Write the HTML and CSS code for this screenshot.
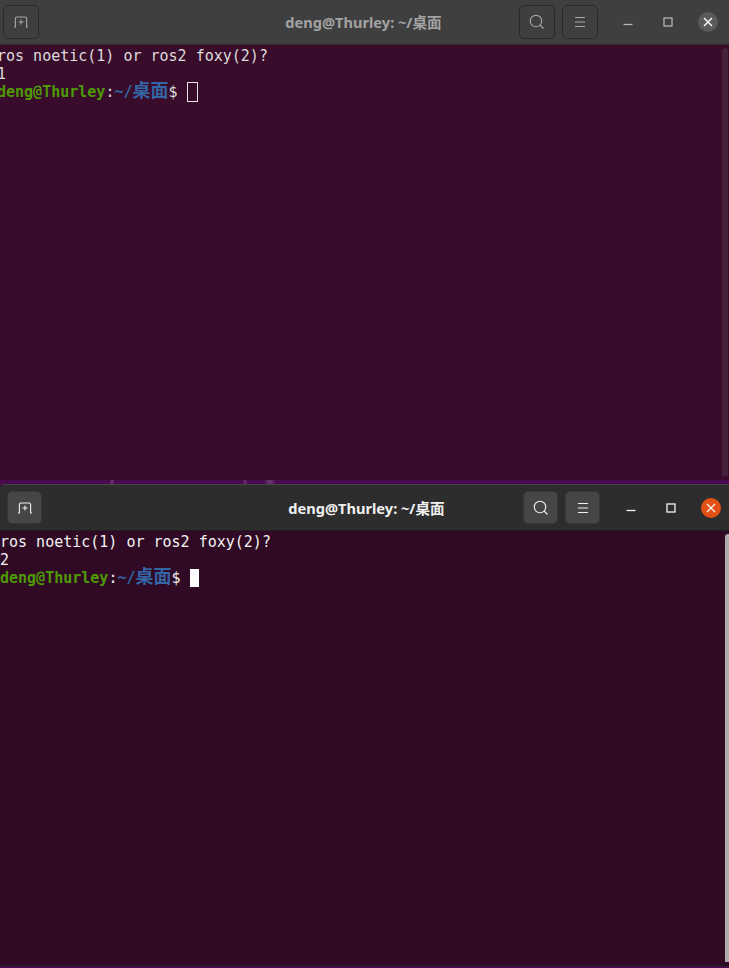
FILE: index.html
```html
<!DOCTYPE html>
<html lang="zh">
<head>
<meta charset="utf-8">
<title>Terminals</title>
<link rel="stylesheet" href="styles.css">
</head>
<body>
<section class="window unfocused">
  <header class="titlebar">
    <div class="side">
      <button class="btn" aria-label="new tab"><svg class="icon" viewBox="0 0 16 16"><path d="M1 13h1.400V4.500a1.500 1.500 0 0 1 1.500-1.500h8.200a1.500 1.500 0 0 1 1.500 1.500V13H15M8 5.500v5M5.500 8h5"/></svg></button>
    </div>
    <h1 class="title">deng@Thurley: ~/<span class="cjk-title">桌面</span></h1>
    <div class="side end">
      <button class="btn" aria-label="search"><svg class="icon" viewBox="0 0 16 16"><circle cx="7" cy="7" r="5.700"/><path d="M11 11l3.500 3.500"/></svg></button>
      <button class="btn" aria-label="menu"><svg class="icon" viewBox="0 0 16 16"><path d="M3 3.500h10M3 8h10M3 12.500h10"/></svg></button>
      <div class="controls">
        <svg class="ctl" viewBox="0 0 20 20"><path d="M5.500 12.500h9"/></svg>
        <svg class="ctl" viewBox="0 0 20 20"><rect x="6" y="6" width="8" height="8"/></svg>
        <span class="close"><svg class="ctl" viewBox="0 0 20 20"><path d="M6 6l8 8M14 6l-8 8"/></svg></span>
      </div>
    </div>
  </header>
  <main class="term">
    <div class="line">ros noetic(1) or ros2 foxy(2)?</div>
    <div class="line">1</div>
    <div class="line"><b class="green">deng@Thurley</b>:<b class="blue">~/<span class="cjk">桌面</span></b>$ <span class="cursor"></span></div>
    <div class="scrollbar"></div>
  </main>
</section>
<div class="gap"></div>
<section class="window focused">
  <header class="titlebar">
    <div class="side">
      <button class="btn" aria-label="new tab"><svg class="icon" viewBox="0 0 16 16"><path d="M1 13h1.400V4.500a1.500 1.500 0 0 1 1.500-1.500h8.200a1.500 1.500 0 0 1 1.500 1.500V13H15M8 5.500v5M5.500 8h5"/></svg></button>
    </div>
    <h1 class="title">deng@Thurley: ~/<span class="cjk-title">桌面</span></h1>
    <div class="side end">
      <button class="btn" aria-label="search"><svg class="icon" viewBox="0 0 16 16"><circle cx="7" cy="7" r="5.700"/><path d="M11 11l3.500 3.500"/></svg></button>
      <button class="btn" aria-label="menu"><svg class="icon" viewBox="0 0 16 16"><path d="M3 3.500h10M3 8h10M3 12.500h10"/></svg></button>
      <div class="controls">
        <svg class="ctl" viewBox="0 0 20 20"><path d="M5.500 12.500h9"/></svg>
        <svg class="ctl" viewBox="0 0 20 20"><rect x="6" y="6" width="8" height="8"/></svg>
        <span class="close"><svg class="ctl" viewBox="0 0 20 20"><path d="M6 6l8 8M14 6l-8 8"/></svg></span>
      </div>
    </div>
  </header>
  <main class="term">
    <div class="line">ros noetic(1) or ros2 foxy(2)?</div>
    <div class="line">2</div>
    <div class="line"><b class="green">deng@Thurley</b>:<b class="blue">~/<span class="cjk">桌面</span></b>$ <span class="cursor"></span></div>
    <div class="scrollbar"></div>
  </main>
</section>
<div class="gap bottom"></div>
</body>
</html>
```
FILE: styles.css
```css
html, body {
  margin: 0;
  height: 968px;
  overflow: hidden;
  background: #470a4d;
}
body {
  display: flex;
  flex-direction: column;
}
.window {
  width: 733px;
  display: flex;
  flex-direction: column;
  flex: none;
  box-sizing: border-box;
}
.window.unfocused {
  margin-left: -4px;
  height: 480px;
}
.window.focused {
  height: 482px;
  margin-left: -1px;
  border-radius: 6px 0 0 0;
  border-bottom: 1px solid #1f1f1f;
  overflow: hidden;
}
.gap {
  height: 4px;
  flex: none;
  background:
    linear-gradient(100deg, transparent 30%, #6a3a70 50%, transparent 70%) 106px 0 / 12px 100% no-repeat,
    linear-gradient(80deg, transparent 30%, #6a3a70 50%, transparent 70%) 240px 0 / 10px 100% no-repeat,
    linear-gradient(80deg, transparent 20%, #6a3a70 50%, transparent 80%) 260px 0 / 20px 100% no-repeat,
    linear-gradient(#4a0a50, #450a4c);
}
.gap.bottom {
  height: 2px;
  background: #470a4d;
}
.titlebar {
  display: grid;
  grid-template-columns: 1fr auto 1fr;
  align-items: center;
  box-sizing: border-box;
  flex: none;
}
.unfocused .titlebar {
  height: 45px;
  padding: 0 7px 1px 7px;
  background: #3f3f3f;
  border-bottom: 1px solid #2c2c2c;
}
.focused .titlebar {
  height: 47px;
  padding: 0 8px;
  background: #2d2d2d;
  border-top: 1px solid #474747;
  border-bottom: 1px solid #1f1f1f;
}
.side {
  display: flex;
  align-items: center;
  gap: 7px;
}
.side.end {
  justify-content: flex-end;
  padding-right: 4px;
}
.focused .side.end {
  padding-right: 3px;
}
.title {
  margin: 0;
  padding-left: 2px;
  font: 700 14.600px/20px "Noto Sans", sans-serif;
  white-space: nowrap;
}
.cjk-title {
  font-family: "Noto Sans CJK SC", sans-serif;
}
.unfocused .title { color: #a2a2a2; }
.focused .title { color: #f0f0f0; }
.btn {
  width: 35px;
  height: 33px;
  padding: 0;
  border-radius: 5px;
  display: flex;
  align-items: center;
  justify-content: center;
  box-sizing: border-box;
}
.unfocused .btn {
  width: 36px;
  height: 34px;
  background: #3f3f3f;
  border: 1px solid #2a2a2a;
}
.focused .btn {
  background: #464646;
  border: 1px solid #383838;
}
.icon {
  width: 16px;
  height: 16px;
  fill: none;
  stroke-width: 1.100;
}
.unfocused .icon { stroke: #a8a8a8; }
.focused .icon { stroke: #f0f0f0; }
.controls {
  display: flex;
  align-items: center;
  gap: 20px;
  margin-left: 13px;
}
.focused .controls {
  margin-left: 14px;
}
.ctl {
  width: 20px;
  height: 20px;
  fill: none;
  display: block;
  stroke-width: 1.300;
}
.unfocused .ctl { stroke: #b4b4b4; }
.focused .ctl { stroke: #f4f4f4; }
.close {
  width: 20px;
  height: 20px;
  border-radius: 50%;
}
.unfocused .close { background: #5a5a5a; }
.unfocused .close .ctl { stroke: #f4f4f4; stroke-width: 1.600; }
.focused .close { background: #e35016; }
.term {
  position: relative;
  flex: 1;
  overflow: hidden;
  padding: 2px 0 0 1px;
  font: 15px/18px "DejaVu Sans Mono", monospace;
}
.unfocused .term { background: #380c2a; color: #dcdcdc; }
.focused .term { background: #300a24; color: #f2f2f2; }
.line {
  height: 18px;
  white-space: pre;
}
.green { color: #4e9a06; }
.blue { color: #3465a4; }
.cjk {
  font: 700 18px/1 "Noto Sans CJK SC", sans-serif;
  line-height: 0;
}
.cursor {
  display: inline-block;
  box-sizing: border-box;
  margin-block: -10px;
}
.unfocused .cursor {
  width: 11px;
  height: 20px;
  border: 1px solid #e4e4e4;
  vertical-align: 5px;
}
.focused .cursor {
  width: 9px;
  height: 18px;
  background: #fff;
  vertical-align: 6px;
}
.scrollbar {
  position: absolute;
  border-radius: 3px 3px 0 0;
  top: 3px;
}
.unfocused .scrollbar {
  right: 1px;
  bottom: 4px;
  width: 6px;
  background: #45223b;
}
.focused .scrollbar {
  right: 0;
  bottom: 3px;
  width: 7px;
  background: #acacac;
}
```
